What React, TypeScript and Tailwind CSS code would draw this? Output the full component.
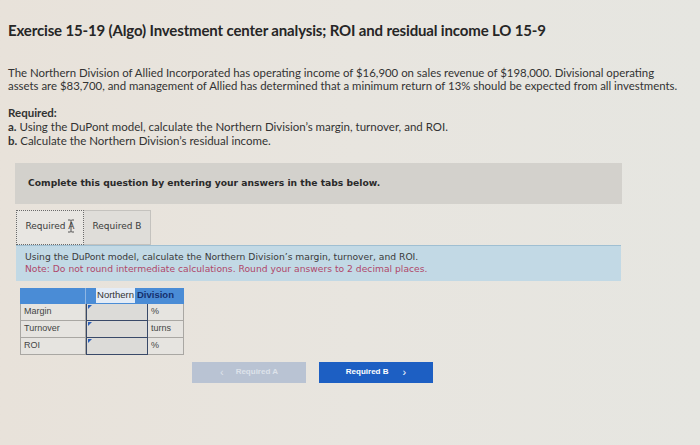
import React from "react";

const rows = [
  { label: "Margin", unit: "%" },
  { label: "Turnover", unit: "turns" },
  { label: "ROI", unit: "%" },
];

export default function App() {
  return (
    <div className="w-[700px] h-[445px] overflow-hidden bg-gradient-to-r from-[#e8e2da] via-[#e8e5df] to-[#e6e6e1] text-[#2b2b2b] font-['Lato',sans-serif]">
      <div className="pl-[8px] pt-[21px]">
        <h1 className="text-[15px] leading-[18px] font-bold text-[#262626] tracking-[-0.15px] whitespace-nowrap">
          Exercise 15-19 (Algo) Investment center analysis; ROI and residual income LO 15-9
        </h1>
        <p className="mt-[27px] text-[11.4px] leading-[13px] text-[#333] whitespace-nowrap">
          The Northern Division of Allied Incorporated has operating income of $16,900 on sales revenue of $198,000. Divisional operating
          <br />
          assets are $83,700, and management of Allied has determined that a minimum return of 13% should be expected from all investments.
        </p>
        <div className="mt-[13.5px] text-[11.5px] leading-[14px] text-[#333]">
          <div className="font-bold">Required:</div>
          <div>
            <span className="font-bold">a.</span> Using the DuPont model, calculate the Northern Division’s margin, turnover, and ROI.
          </div>
          <div>
            <span className="font-bold">b.</span> Calculate the Northern Division’s residual income.
          </div>
        </div>
      </div>

      <div className="ml-[15px] mt-[15px] w-[607px] h-[41px] bg-[#d3d1cc] flex items-center pl-[13px] font-['DejaVu_Sans',sans-serif] text-[9.2px] font-bold text-[#2a2a2a]">
        Complete this question by entering your answers in the tabs below.
      </div>

      <div className="ml-[16px] mt-[6px] flex h-[35px] font-['DejaVu_Sans',sans-serif] text-[9px] text-[#3a3a3a]">
        <div className="relative w-[68px] border border-dotted border-[#6a6a6a] bg-[#e8e6e2] flex items-center justify-center">
          Required A
          <svg className="absolute left-[50px] top-[8px]" width="8" height="14" viewBox="0 0 8 14">
            <path d="M1 1h2.5l.5.5.5-.5H7M4 1.5v11M1 13h2.5l.5-.5.5.5H7" stroke="#444" strokeWidth="0.9" fill="none" />
          </svg>
        </div>
        <div className="w-[67px] border border-[#c4c2be] border-l-0 bg-[#dfddd9] flex items-center justify-center">
          Required B
        </div>
      </div>

      <div className="ml-[16px] w-[605px] h-[36px] bg-[#c2d9e5] border-t border-[#9fbfd2] flex flex-col justify-center pl-[9px] font-['DejaVu_Sans',sans-serif] text-[9.2px] leading-[12px]">
        <div className="text-[#3a3a3a]">Using the DuPont model, calculate the Northern Division’s margin, turnover, and ROI.</div>
        <div className="text-[#b0486a]">Note: Do not round intermediate calculations. Round your answers to 2 decimal places.</div>
      </div>

      <div className="ml-[20px] mt-[7px] w-[164px] font-['Liberation_Sans',sans-serif] text-[9px] text-[#444]">
        <div className="flex h-[16px] bg-[#4a8cd6]">
          <div className="w-[66px] border-r border-[#8fb6e3]" />
          <div className="flex-1 flex items-center justify-center text-[9.5px]">
            <span className="bg-[#e4ecf6] text-[#333] px-[1px]">Northern</span>
            <span className="font-bold text-[#15306e] ml-[2px]">Division</span>
          </div>
        </div>
        {rows.map((r) => (
          <div key={r.label} className="flex h-[17px]">
            <div className="w-[66px] border border-t-0 border-[#a9a7a3] bg-[#e6e4e0] pl-[3px] flex items-center">
              {r.label}
            </div>
            <div className="relative w-[62px] border-[1.5px] border-t-0 border-[#394968] bg-[#dcdbd8]">
              <div className="absolute left-[1px] top-[1px] w-0 h-0 border-t-[4px] border-r-[4px] border-t-[#2a5fb8] border-r-transparent" />
            </div>
            <div className="flex-1 border border-t-0 border-l-0 border-[#a9a7a3] bg-[#e6e4e0] pl-[3px] flex items-center">
              {r.unit}
            </div>
          </div>
        ))}
      </div>

      <div className="ml-[192px] mt-[7px] flex gap-[13px] font-['Liberation_Sans',sans-serif] text-[8px] font-bold">
        <div className="w-[114px] h-[21px] bg-[#b9c3d3] text-[#dde2ea] flex items-center justify-center gap-[12px]">
          <span className="text-[11px] font-normal">‹</span>
          <span>Required A</span>
        </div>
        <div className="w-[114px] h-[21px] bg-[#1d5fc3] text-white flex items-center justify-center gap-[14px]">
          <span>Required B</span>
          <span className="text-[11px] font-normal">›</span>
        </div>
      </div>
    </div>
  );
}
